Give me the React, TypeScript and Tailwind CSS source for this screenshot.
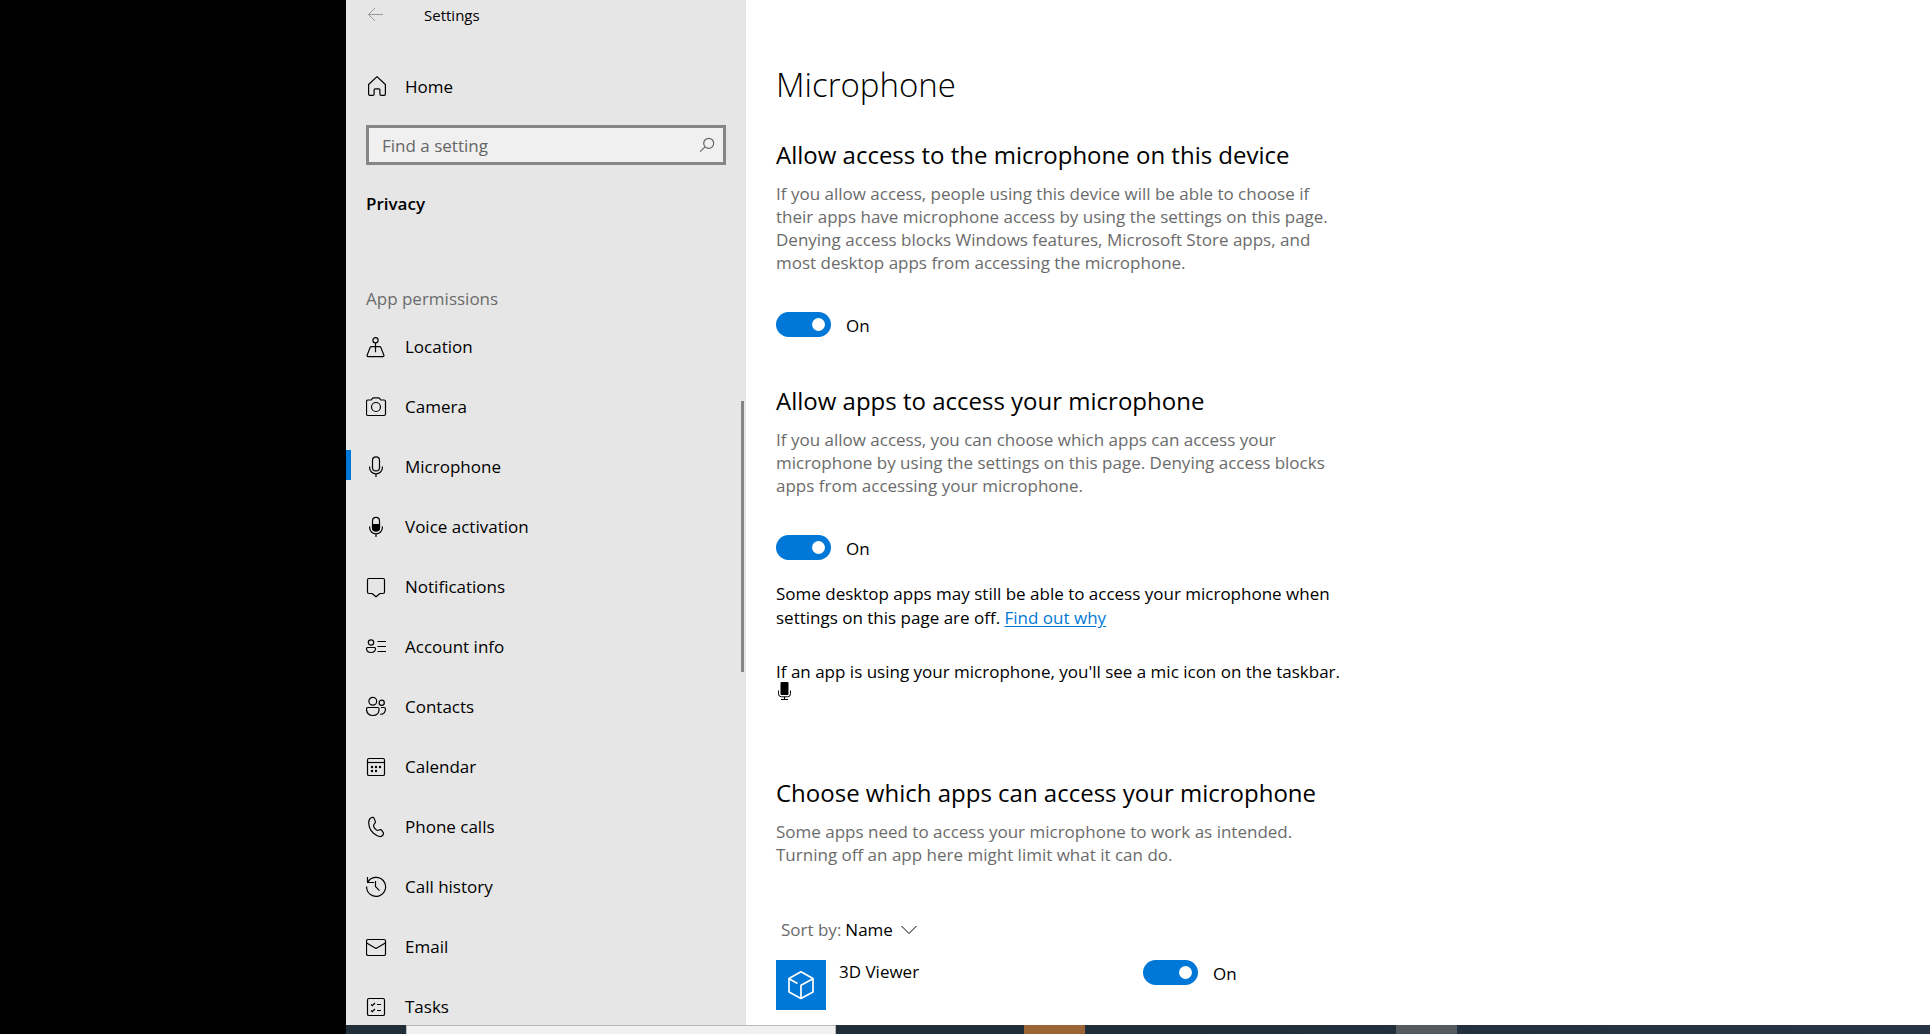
import { useId, useState, type ReactNode } from "react";

function Glyph({ children }: { children: ReactNode }) {
  return (
    <svg
      viewBox="0 0 22 22"
      className="h-[22px] w-[22px] shrink-0"
      fill="none"
      stroke="currentColor"
      strokeWidth="1.2"
      strokeLinejoin="round"
      aria-hidden="true"
    >
      {children}
    </svg>
  );
}

const micStand = <path d="M3.6 10.5v1a6.4 6.4 0 0 0 12.8 0v-1M10 17.9V21" />;

const items: { label: string; icon: ReactNode }[] = [
  {
    label: "Location",
    icon: (
      <Glyph>
        <circle cx="9.5" cy="4.3" r="2.6" />
        <path d="M9.5 7v9.3M9.5 10.600H5.3q-.8 0-1.1.8L1.2 19q-.6 1.700 1 1.700h14.600q1.600 0 1-1.700l-3-7.600q-.3-.8-1.100-.8H9.500" />
      </Glyph>
    ),
  },
  {
    label: "Camera",
    icon: (
      <Glyph>
        <path d="M2 4h3.2l1.3-1.7q.3-.4.8-.4h5.4q.5 0 .8.4L14.8 4H18q1.5 0 1.5 1.5v12.500q0 1.5-1.5 1.5H2Q.5 19.5.5 18V5.5Q.5 4 2 4Z" />
        <circle cx="10" cy="11" r="4.5" />
      </Glyph>
    ),
  },
  {
    label: "Microphone",
    icon: (
      <Glyph>
        <rect x="6.5" y="0.9" width="7" height="14" rx="3.5" />
        {micStand}
      </Glyph>
    ),
  },
  {
    label: "Voice activation",
    icon: (
      <Glyph>
        <rect x="6.5" y="1.4" width="7" height="13.6" rx="3.5" />
        <path d="M6.5 8.5h7v3a3.5 3.5 0 0 1-7 0Z" fill="currentColor" />
        {micStand}
      </Glyph>
    ),
  },
  {
    label: "Notifications",
    icon: (
      <Glyph>
        <path d="M3 2.5h14q1.5 0 1.5 1.5v12q0 1.5-1.5 1.500h-3l-4 3.300-4-3.300H3Q1.5 17.5 1.5 16V4Q1.5 2.5 3 2.5Z" />
      </Glyph>
    ),
  },
  {
    label: "Account info",
    icon: (
      <Glyph>
        <circle cx="5" cy="6.5" r="2.7" />
        <path d="M1.7 11.500h6.600q1.300 0 1.200 1.300-.3 3.700-4.500 3.700T.5 12.800q-.1-1.300 1.200-1.300ZM11.500 5.500H20M11.500 10.500H20M11.500 15.500H20" />
      </Glyph>
    ),
  },
  {
    label: "Contacts",
    icon: (
      <Glyph>
        <circle cx="6.8" cy="5.3" r="3.9" />
        <circle cx="15.7" cy="6.7" r="2.6" />
        <path d="M2 11.500h9.600q1.500 0 1.500 1.500c0 4-2.400 6.500-6.300 6.500S.5 17 .5 13q0-1.500 1.500-1.500ZM15 11.500h3q1.500 0 1.500 1.500c0 3.300-1.800 5.200-5.200 5.400" />
      </Glyph>
    ),
  },
  {
    label: "Calendar",
    icon: (
      <Glyph>
        <rect x="1.5" y="2.5" width="17" height="17" rx="1.6" />
        <path d="M1.500 6.500h17" />
        <g fill="currentColor" stroke="none">
          <circle cx="6" cy="11" r="1.2" />
          <circle cx="10" cy="11" r="1.2" />
          <circle cx="14" cy="11" r="1.2" />
          <circle cx="6" cy="15" r="1.2" />
          <circle cx="10" cy="15" r="1.2" />
        </g>
      </Glyph>
    ),
  },
  {
    label: "Phone calls",
    icon: (
      <Glyph>
        <path d="M5 1.800C6.300.9 7.700 1.300 8.200 2.600l1 2.500c.4 1.200 0 2-.8 2.800-1 .8-1 1.600-.6 2.800.6 1.600 1.500 2.600 2.800 3.400.9.500 1.600.3 2.500-.1 1.300-.6 2.200-.2 2.900.7l1.100 1.600c.7 1.100.4 2.200-.6 3.200-1.200 1.200-3.200 1.300-5.200.3C5.800 17 2.800 11.700 2.700 6.800c0-2.400.8-4.100 2.300-5Z" />
      </Glyph>
    ),
  },
  {
    label: "Call history",
    icon: (
      <Glyph>
        <path d="M1.500 1v5.500H8M1.800 6.200a9.500 9.500 0 1 1-1.200 4.300M9.500 5v5.700l4 4" />
      </Glyph>
    ),
  },
  {
    label: "Email",
    icon: (
      <Glyph>
        <rect x="0.5" y="3.5" width="19" height="16" rx="1.6" />
        <path d="m.7 7 9.300 5.500L19.300 7" />
      </Glyph>
    ),
  },
  {
    label: "Tasks",
    icon: (
      <Glyph>
        <rect x="1.5" y="2.5" width="17" height="17" rx="1.6" />
        <path d="m5 8.500 1.200 1.200L9 7M5 14.500l1.200 1.200L9 13M11 8.500h4M11 14.500h4" />
      </Glyph>
    ),
  },
];

function Toggle({ label }: { label: string }) {
  const id = useId();
  const [on, setOn] = useState(true);
  return (
    <div className="flex h-[25px] items-center gap-[15px]">
      <span className="relative flex h-[25px] w-[55px] shrink-0">
        <input
          id={id}
          type="checkbox"
          role="switch"
          aria-label={label}
          checked={on}
          onChange={(e) => setOn(e.target.checked)}
          className="peer h-full w-full cursor-pointer appearance-none rounded-full border-2 border-[#333] checked:border-[#0078d7] checked:bg-[#0078d7]"
        />
        <span className="pointer-events-none absolute top-[6px] left-[6px] h-[13px] w-[13px] rounded-full bg-[#333] peer-checked:right-[6px] peer-checked:left-auto peer-checked:bg-white" />
      </span>
      <label htmlFor={id} className="pt-[2px]">
        {on ? "On" : "Off"}
      </label>
    </div>
  );
}

const heading = "text-[24px] leading-8";
const hint = "mt-[11px] leading-[23px] text-[#6b6b6b]";

function Sidebar() {
  return (
    <aside className="relative flex w-[400px] shrink-0 flex-col overflow-hidden bg-[#e6e6e6]">
      <header className="flex h-[30px] shrink-0 items-center pl-5">
        <button type="button" aria-label="Back" className="text-[#999]">
          <svg viewBox="0 0 20 16" className="h-4 w-5" fill="none" stroke="currentColor" aria-hidden="true">
            <path d="M9 1 2.500 7.500 9 14M2.500 7.500H17" />
          </svg>
        </button>
        <h1 className="ml-[38px] text-[15px]">Settings</h1>
      </header>
      <a href="#home" className="mt-[27px] flex h-[60px] shrink-0 items-center gap-[17px] pl-5">
        <Glyph>
          <path d="M2.600 8.500 11 .6l8.400 7.900v9.600q0 1.300-1.300 1.300h-3q-1.200 0-1.200-1.300v-4.300q0-1-1-1H9.100q-1 0-1 1v4.300q0 1.300-1.200 1.300h-3q-1.300 0-1.300-1.300Z" />
        </Glyph>
        Home
      </a>
      <div className="mx-5 mt-2 flex h-10 shrink-0 items-center border-[3px] border-[#868686] bg-[#f0f0f0] pr-2 pl-[13px]">
        <input
          type="search"
          aria-label="Find a setting"
          placeholder="Find a setting"
          className="min-w-0 flex-1 bg-transparent pt-[2px] outline-none placeholder:text-[#666]"
        />
        <svg viewBox="0 0 16 16" className="h-4 w-4" fill="none" stroke="#666" strokeWidth="1.2" aria-hidden="true">
          <circle cx="9.7" cy="6.3" r="5" />
          <path d="M6 9.900 1.200 14.600" />
        </svg>
      </div>
      <h2 className="mx-5 mt-[27px] leading-6 font-semibold">Privacy</h2>
      <h3 className="mx-5 mt-[71px] leading-6 text-[#6b6b6b]">App permissions</h3>
      <nav className="mt-1">
        {items.map(({ label, icon }) => (
          <a
            key={label}
            href={"#" + label.toLowerCase().replace(" ", "-")}
            aria-current={label === "Microphone" ? "page" : undefined}
            className="group flex h-[60px] items-center"
          >
            <span className="h-[30px] w-[5px] group-aria-[current=page]:bg-[#0078d7]" />
            <span className="ml-[15px] flex items-center gap-[17px] pt-[3px]">
              {icon}
              {label}
            </span>
          </a>
        ))}
      </nav>
      <div className="absolute top-[401px] right-[2px] h-[271px] w-[3px] bg-[#858585]" />
    </aside>
  );
}

function Content() {
  return (
    <main className="min-w-0 flex-1 overflow-hidden bg-white pt-[60px] pl-[30px]">
      <h1 className="text-[33px] leading-[50px] font-light">Microphone</h1>

      <section className="mt-[29px] max-w-[600px]">
        <h2 className={heading}>Allow access to the microphone on this device</h2>
        <p className={hint}>
          If you allow access, people using this device will be able to choose if
          <br />
          their apps have microphone access by using the settings on this page.
          <br />
          Denying access blocks Windows features, Microsoft Store apps, and
          <br />
          most desktop apps from accessing the microphone.
        </p>
        <div className="mt-[38px]">
          <Toggle label="Allow access to the microphone on this device" />
        </div>
      </section>

      <section className="mt-[48px] max-w-[600px]">
        <h2 className={heading}>Allow apps to access your microphone</h2>
        <p className={hint}>
          If you allow access, you can choose which apps can access your
          <br />
          microphone by using the settings on this page. Denying access blocks
          <br />
          apps from accessing your microphone.
        </p>
        <div className="mt-[38px]">
          <Toggle label="Allow apps to access your microphone" />
        </div>
        <p className="mt-[22px] leading-6">
          Some desktop apps may still be able to access your microphone when
          <br />
          settings on this page are off.{" "}
          <a href="#why" className="text-[#0078d7] underline underline-offset-2">
            Find out why
          </a>
        </p>
        <p className="mt-[30px] leading-6">If an app is using your microphone, you'll see a mic icon on the taskbar.</p>
        <svg viewBox="0 0 16 20" className="-mt-[3px] h-5 w-4 text-black" fill="none" stroke="currentColor" aria-hidden="true">
          <rect x="4.5" y="1" width="8" height="13" rx="1" fill="currentColor" stroke="none" />
          <path d="M2.500 9.500v3.300q0 3 3 3h6q3 0 3-3V9.500M8.500 16v2.500M5 18.500h7" />
        </svg>
      </section>

      <section className="mt-[76px] max-w-[600px]">
        <h2 className={heading}>Choose which apps can access your microphone</h2>
        <p className={hint}>
          Some apps need to access your microphone to work as intended.
          <br />
          Turning off an app here might limit what it can do.
        </p>
        <div className="mt-[48px] flex h-8 items-center pl-[5px]">
          <label htmlFor="sort" className="text-[#6b6b6b]">
            Sort by:
          </label>
          <select id="sort" className="ml-1 w-[50px] cursor-pointer appearance-none bg-transparent">
            <option>Name</option>
          </select>
          <svg viewBox="0 0 18 18" className="ml-[5px] h-[18px] w-[18px]" fill="none" stroke="currentColor" aria-hidden="true">
            <path d="m1.500 5 7.500 7.500L16.500 5" />
          </svg>
        </div>
        <div className="mt-[14px] flex items-start">
          <span className="flex h-[50px] w-[50px] items-center justify-center bg-[#0078d7]">
            <svg viewBox="0 0 28 30" className="h-[30px] w-7" fill="none" stroke="#fff" strokeWidth="1.7" strokeLinejoin="round" aria-hidden="true">
              <path d="M14 1.800 26 8.500v13.500L14 28.500 2 22V8.500ZM2.500 9l8 4.600M26 8.700l-12 6.500v13" />
            </svg>
          </span>
          <span className="ml-[13px] w-[304px] leading-6">3D Viewer</span>
          <Toggle label="3D Viewer" />
        </div>
      </section>
    </main>
  );
}

export default function App() {
  return (
    <div className="flex h-screen overflow-hidden bg-black font-['Open_Sans',sans-serif] text-[17px] text-black">
      <div className="w-[346px] shrink-0 bg-black" />
      <div className="flex min-w-0 flex-1 flex-col">
        <div className="flex min-h-0 flex-1">
          <Sidebar />
          <Content />
        </div>
        <footer className="flex h-[9px] shrink-0 bg-linear-to-r from-[#1f2e38] via-[#1f2e38] to-[#273446]">
          <div className="ml-[60px] w-[430px] border border-b-0 border-[#b8b8b8] bg-[#f1f1f1]" />
          <div className="ml-[188px] w-[61px] bg-[#9c6435]" />
          <div className="ml-[311px] w-[61px] bg-[#545b61]" />
        </footer>
      </div>
    </div>
  );
}
